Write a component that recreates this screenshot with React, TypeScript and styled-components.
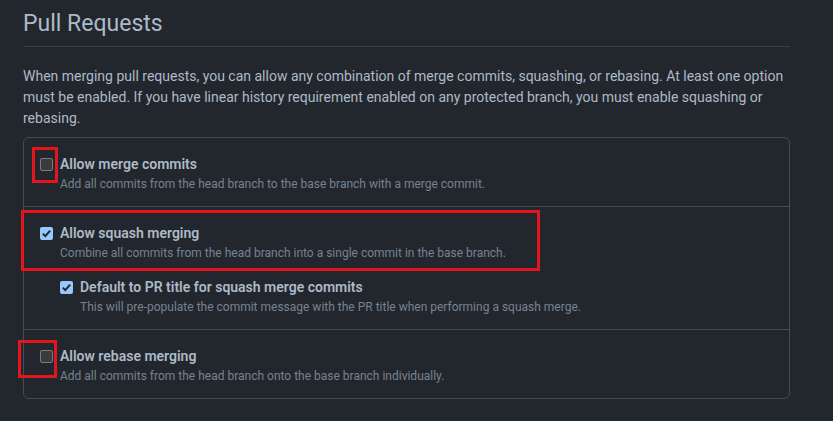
import styled, { createGlobalStyle } from "styled-components";

type Option = {
  label: string;
  note: string;
  checked: boolean;
  nested?: Option[];
};

const options: Option[] = [
  {
    label: "Allow merge commits",
    note: "Add all commits from the head branch to the base branch with a merge commit.",
    checked: false,
  },
  {
    label: "Allow squash merging",
    note: "Combine all commits from the head branch into a single commit in the base branch.",
    checked: true,
    nested: [
      {
        label: "Default to PR title for squash merge commits",
        note: "This will pre-populate the commit message with the PR title when performing a squash merge.",
        checked: true,
      },
    ],
  },
  {
    label: "Allow rebase merging",
    note: "Add all commits from the head branch onto the base branch individually.",
    checked: false,
  },
];

// red annotation boxes drawn over the screenshot
const marks = [
  { left: 32, top: 147, width: 26, height: 36 },
  { left: 21, top: 210, width: 519, height: 61 },
  { left: 18, top: 340, width: 39, height: 38 },
];

const Check = ({ checked }: { checked: boolean }) => (
  <CheckBox checked={checked}>
    {checked && (
      <svg width="13" height="13" viewBox="0 0 13 13">
        <path d="M2.8 6.6 L5.3 9.1 L10.2 3.6" fill="none" stroke="#22272e" strokeWidth="2" />
      </svg>
    )}
  </CheckBox>
);

const OptionItem = ({ opt }: { opt: Option }) => (
  <Item>
    <Check checked={opt.checked} />
    <div>
      <Label>{opt.label}</Label>
      <Note>{opt.note}</Note>
    </div>
  </Item>
);

const App = (): JSX.Element => {
  return (
    <Page>
      <GlobalStyle />
      <Title>Pull Requests</Title>
      <Intro>
        When merging pull requests, you can allow any combination of merge commits, squashing, or
        rebasing. At least one option must be enabled. If you have linear history requirement enabled
        on any protected branch, you must enable squashing or rebasing.
      </Intro>
      <Box>
        {options.map((opt) => (
          <Row key={opt.label}>
            <OptionItem opt={opt} />
            {opt.nested?.map((n) => (
              <Nested key={n.label}>
                <OptionItem opt={n} />
              </Nested>
            ))}
          </Row>
        ))}
      </Box>
      {marks.map((m, i) => (
        <Mark key={i} style={m} />
      ))}
    </Page>
  );
};
export default App;

const GlobalStyle = createGlobalStyle`
  html, body {
    margin: 0;
    background: #22272e;
  }
  body {
    font-family: Roboto, "Liberation Sans", sans-serif;
    color: #adbac7;
  }
`;

const Page = styled.div`
  position: relative;
  width: 767px;
  padding: 0 0 0 23px;
  min-height: 421px;
  box-sizing: content-box;
`;

const Title = styled.h2`
  margin: 0;
  padding: 9px 0 7px;
  font-size: 23px;
  line-height: 30px;
  font-weight: 400;
  color: #adbac7;
  border-bottom: 1px solid #373e47;
`;

const Intro = styled.p`
  margin: 19px 0 8px;
  font-size: 14px;
  line-height: 21px;
  color: #adbac7;
`;

const Box = styled.div`
  border: 1px solid #444c56;
  border-radius: 6px;
`;

const Row = styled.div`
  padding: 16px 16px 13px;
  & + & {
    border-top: 1px solid #444c56;
  }
`;

const Nested = styled.div`
  margin: 15px 0 0 20px;
`;

const Item = styled.div`
  display: flex;
  align-items: flex-start;
  gap: 7px;
`;

const CheckBox = styled.span<{ checked: boolean }>`
  flex: none;
  width: 13px;
  height: 13px;
  margin-top: 4px;
  box-sizing: border-box;
  border-radius: 2px;
  display: flex;
  align-items: center;
  justify-content: center;
  background: ${(p) => (p.checked ? "#99c8ff" : "#3b3b3b")};
  border: ${(p) => (p.checked ? "none" : "1px solid #7a7a7a")};
`;

const Label = styled.div`
  font-size: 14px;
  line-height: 21px;
  font-weight: 600;
  color: #adbac7;
`;

const Note = styled.div`
  font-size: 12px;
  line-height: 18px;
  color: #768390;
`;

const Mark = styled.div`
  position: absolute;
  box-sizing: border-box;
  border: 3px solid #e5151e;
`;
